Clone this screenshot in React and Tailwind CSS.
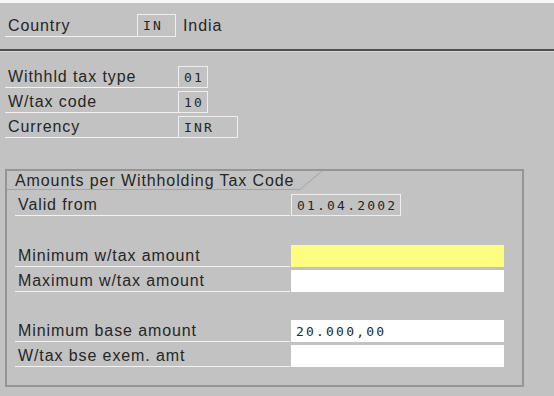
import React from "react";

const sans = { fontFamily: '"Liberation Sans", Arial, sans-serif' };

function Label({ text, width }) {
  return (
    <div
      className="h-full flex items-center pl-[3px] pt-[1px] border-b border-[#f2f2f2] text-[#262626] text-[16px] tracking-[0.9px] leading-none"
      style={{ width }}
    >
      {text}
    </div>
  );
}

function Display({ value, width }) {
  return (
    <div
      className="h-full flex items-center pl-[5px] border border-[#eeeeee] font-['DejaVu_Sans_Mono',monospace] text-[13px] tracking-[2.2px] text-[#262626] leading-none"
      style={{ width }}
    >
      {value}
    </div>
  );
}

function Input({ value, yellow }) {
  return (
    <div
      className={`h-full w-[213px] flex items-center pl-[5px] font-['DejaVu_Sans_Mono',monospace] text-[13px] tracking-[2.2px] text-[#262626] leading-none ${
        yellow ? "bg-[#fdfd80]" : "bg-white"
      }`}
    >
      {value}
    </div>
  );
}

function HeaderRow({ label, children }) {
  return (
    <div className="flex h-[22px] pl-[5px]">
      <Label text={label} width={173} />
      {children}
    </div>
  );
}

function BoxRow({ label, children }) {
  return (
    <div className="flex h-[22px] pl-[8px]">
      <Label text={label} width={275} />
      <div className="w-[1px]" />
      {children}
    </div>
  );
}

export default function App() {
  return (
    <div
      className="w-[554px] h-[396px] bg-[#c2c2c2] overflow-hidden flex flex-col"
      style={sans}
    >
      <div className="h-[3px] bg-[#f6f6f6]" />

      {/* country */}
      <div className="flex h-[23px] mt-[11px] pl-[5px]">
        <Label text="Country" width={132} />
        <Display value="IN" width={39} />
        <div className="h-full flex items-center pl-[7px] pt-[1px] text-[16px] tracking-[0.9px] text-[#262626] leading-none">
          India
        </div>
      </div>

      <div className="mt-[12px] h-[2px] bg-[#4e4e4e]" />
      <div className="h-[1px] bg-[#dadada]" />

      {/* tax type block */}
      <div className="flex flex-col gap-[3px] mt-[14px]">
        <HeaderRow label="Withhld tax type">
          <Display value="01" width={30} />
        </HeaderRow>
        <HeaderRow label="W/tax code">
          <Display value="10" width={30} />
        </HeaderRow>
        <HeaderRow label="Currency">
          <Display value="INR" width={60} />
        </HeaderRow>
      </div>

      {/* group box */}
      <div className="ml-[5px] mt-[31px] w-[519px] h-[218px] border-2 border-[#959595] flex flex-col">
        <div className="flex h-[19px]">
          <div className="w-[293px] h-full border-b border-[#a4a4a4] pl-[8px] pt-[1px] flex items-center text-[16px] tracking-[0.9px] text-[#262626] leading-none">
            Amounts per Withholding Tax Code
          </div>
          <svg width="22" height="19" viewBox="0 0 22 19" className="block">
            <line x1="0" y1="18.5" x2="22" y2="0" stroke="#a4a4a4" strokeWidth="1" />
          </svg>
        </div>

        <div className="mt-[4px]">
          <BoxRow label="Valid from">
            <Display value="01.04.2002" width={110} />
          </BoxRow>
        </div>

        <div className="mt-[29px] flex flex-col gap-[3px]">
          <BoxRow label="Minimum w/tax amount">
            <Input yellow />
          </BoxRow>
          <BoxRow label="Maximum w/tax amount">
            <Input />
          </BoxRow>
        </div>

        <div className="mt-[28px] flex flex-col gap-[3px]">
          <BoxRow label="Minimum base amount">
            <Input value="20.000,00" />
          </BoxRow>
          <BoxRow label="W/tax bse exem. amt">
            <Input />
          </BoxRow>
        </div>
      </div>
    </div>
  );
}
